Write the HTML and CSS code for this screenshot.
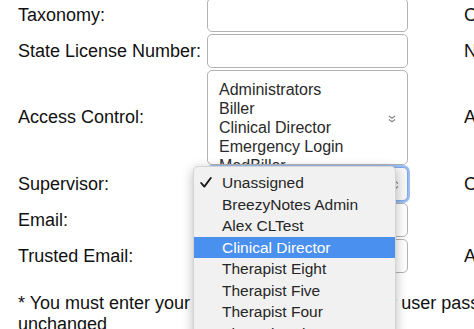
FILE: index.html
```html
<!DOCTYPE html>
<html>
<head>
<meta charset="utf-8">
<link rel="stylesheet" href="styles.css">
</head>
<body>
<div class="page">
  <div class="form-grid">
    <div class="label">Taxonomy:</div>
    <div class="field"><div class="input"></div></div>
    <div class="label side">Credentials:</div>

    <div class="label">State License Number:</div>
    <div class="field"><div class="input"></div></div>
    <div class="label side">NPI:</div>

    <div class="label">Access Control:</div>
    <div class="field">
      <div class="multi">
        <div class="opt">Administrators</div>
        <div class="opt">Biller</div>
        <div class="opt">Clinical Director</div>
        <div class="opt">Emergency Login</div>
        <div class="opt">MedBiller</div>
        <svg class="dbl" width="8" height="8" viewBox="0 0 8 8"><path d="M1 1 L4 3.2 L7 1 M1 4.5 L4 6.7 L7 4.5" fill="none" stroke="#8c8c8c" stroke-width="1.3"/></svg>
      </div>
    </div>
    <div class="label side">Active:</div>

    <div class="label">Supervisor:</div>
    <div class="field sup">
      <div class="select focus">
        <svg class="updown" width="8" height="12" viewBox="0 0 8 12"><path d="M1 4.5 L4 2 L7 4.5 M1 7.5 L4 10 L7 7.5" fill="none" stroke="#8c8c8c" stroke-width="1.2"/></svg>
      </div>
      <div class="popup">
        <div class="item"><svg class="check" width="12" height="11" viewBox="0 0 12 11"><path d="M1.2 6 L4.3 9.6 L10.8 1" fill="none" stroke="#1a1a1a" stroke-width="1.9" stroke-linecap="round" stroke-linejoin="round"/></svg>Unassigned</div>
        <div class="item">BreezyNotes Admin</div>
        <div class="item">Alex CLTest</div>
        <div class="item active">Clinical Director</div>
        <div class="item">Therapist Eight</div>
        <div class="item">Therapist Five</div>
        <div class="item">Therapist Four</div>
        <div class="item">Therapist Nine</div>
      </div>
    </div>
    <div class="label side">Co-signer:</div>

    <div class="label">Email:</div>
    <div class="field"><div class="input"></div></div>
    <div class="label side"></div>

    <div class="label">Trusted Email:</div>
    <div class="field"><div class="input"></div></div>
    <div class="label side">Admin:</div>
  </div>
  <p class="note">* You must enter your password to change their user password, otherwise it remains unchanged</p>
</div>
</body>
</html>
```
FILE: styles.css
```css
html, body {
  margin: 0;
  padding: 0;
  overflow: hidden;
  background: #ffffff;
}
body {
  font-family: "Liberation Sans", Arial, sans-serif;
  color: #111111;
}
.page {
  width: 720px;
  margin-top: -2px;
  padding-left: 18px;
}
.form-grid {
  display: grid;
  grid-template-columns: 189px 201px 56px auto;
  grid-template-rows: 34px 34px 95px 34px 34px 34px;
  row-gap: 2px;
}
.label {
  font-size: 18px;
  align-self: center;
  white-space: nowrap;
}
.side {
  grid-column: 4;
}
.field {
  position: relative;
}
.input, .multi, .select {
  box-sizing: border-box;
  height: 100%;
  border: 1px solid #b3b3b3;
  border-radius: 5px;
  background: #ffffff;
}
.multi {
  position: relative;
  overflow: hidden;
  padding: 9px 0 0 11px;
}
.opt {
  font-size: 16px;
  line-height: 19px;
  color: #2a2a2a;
  white-space: nowrap;
}
.dbl {
  position: absolute;
  right: 11px;
  top: 44px;
}
.select {
  position: relative;
  border-color: #7fa8e6;
  box-shadow: 0 0 0 2px rgba(120, 168, 240, 0.75);
  background: #f7f7f7;
}
.updown {
  position: absolute;
  right: 8px;
  top: 11px;
}
.popup {
  position: absolute;
  left: -14px;
  top: -1px;
  width: 203px;
  height: 180px;
  box-sizing: border-box;
  padding-top: 5px;
  background: #f1f1f1;
  border: 1px solid #d4d4d4;
  border-radius: 5px 5px 0 0;
  box-shadow: 0 3px 12px rgba(0, 0, 0, 0.28);
  overflow: hidden;
  z-index: 2;
}
.item {
  position: relative;
  height: 21.5px;
  line-height: 21.5px;
  padding-left: 28px;
  font-size: 15.5px;
  color: #262626;
  white-space: nowrap;
}
.item.active {
  background: #4a90ee;
  color: #ffffff;
}
.check {
  position: absolute;
  left: 6px;
  top: 5px;
}
.note {
  margin: 20px 0 0 0;
  width: 680px;
  font-size: 18px;
  line-height: 21px;
}
```
